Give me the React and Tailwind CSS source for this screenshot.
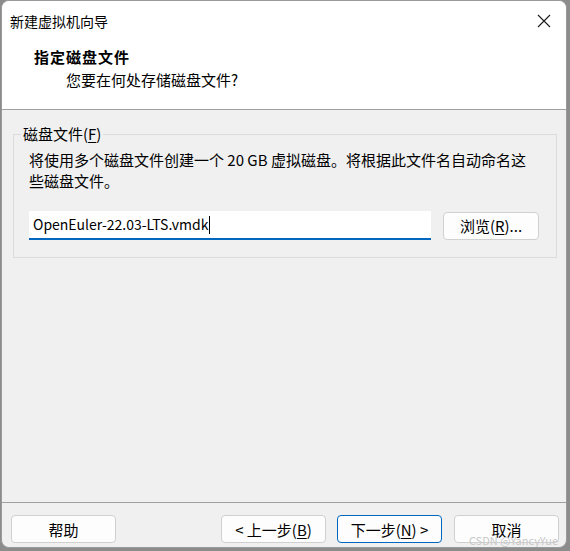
import React from "react";

const font = "font-['Segoe_UI','Noto_Sans_CJK_SC',sans-serif]";

function Btn({ children, primary, className = "" }) {
  return (
    <button
      className={`flex h-[28px] shrink-0 items-center justify-center rounded-[4px] border bg-[#fdfdfd] text-[15px] leading-none text-black ${
        primary ? "border-[#0067c0]" : "border-[#d0d0d0]"
      } ${className}`}
    >
      {children}
    </button>
  );
}

function U({ children }) {
  return <span className="underline decoration-1 underline-offset-2">{children}</span>;
}

export default function App() {
  return (
    <div className={`h-[551px] w-[570px] overflow-hidden bg-[#8c8c8c] pl-[1px] ${font}`}>
      <div className="flex h-[548px] w-[566px] flex-col overflow-hidden rounded-[8px] border border-[#9a9a9a] bg-[#f0f0f0]">
        <div className="bg-white">
          <div className="flex h-[40px] items-center justify-between pl-[8px] pr-[15px]">
            <span className="text-[14px] text-black">新建虚拟机向导</span>
            <svg width="14" height="14" viewBox="0 0 14 14" className="text-[#1a1a1a]">
              <path d="M1 1L13 13M13 1L1 13" stroke="currentColor" strokeWidth="1.1" />
            </svg>
          </div>
          <div className="h-[68px] pl-[32px] pt-[6px]">
            <div className="text-[15px] font-bold leading-[20px] tracking-[1px] text-black">指定磁盘文件</div>
            <div className="pl-[32px] pt-[3px] text-[15px] leading-[20px] text-black">
              您要在何处存储磁盘文件?
            </div>
          </div>
        </div>
        <div className="h-px bg-[#a0a0a0]" />
        <div className="flex-1 pl-[11px] pt-[24px]">
          <div className="relative h-[124px] w-[544px] border border-[#dcdcdc] pl-[15px]">
            <span className="absolute -top-[11px] left-[7px] bg-[#f0f0f0] px-[2px] text-[15px] leading-[20px] text-black">
              磁盘文件(<U>F</U>)
            </span>
            <p className="pt-[14px] text-[15px] leading-[21px] text-black">
              将使用多个磁盘文件创建一个 20 GB 虚拟磁盘。将根据此文件名自动命名这
              <br />
              些磁盘文件。
            </p>
            <div className="mt-[20px] flex items-center gap-[12px]">
              <div className="flex h-[29px] w-[402px] shrink-0 items-center border-b-2 border-[#0067c0] bg-white pl-[4px] text-[14px] text-black">
                OpenEuler-22.03-LTS.vmdk
                <span className="ml-px h-[18px] w-px bg-black" />
              </div>
              <Btn className="w-[96px]">
                浏览(<U>R</U>)...
              </Btn>
            </div>
          </div>
        </div>
        <div className="h-px bg-[#a0a0a0]" />
        <div className="relative flex h-[44px] items-start pl-[9px] pt-[12px]">
          <Btn className="w-[105px]">帮助</Btn>
          <Btn className="ml-[105px] w-[105px]">
            &lt; 上一步(<U>B</U>)
          </Btn>
          <Btn primary className="ml-[11px] w-[105px]">
            下一步(<U>N</U>) &gt;
          </Btn>
          <Btn className="ml-[12px] w-[105px]">取消</Btn>
          <span className="absolute bottom-0 right-[8px] text-[11px] leading-[14px] text-[#c8c8c8]">CSDN @YancyYue</span>
        </div>
      </div>
    </div>
  );
}
